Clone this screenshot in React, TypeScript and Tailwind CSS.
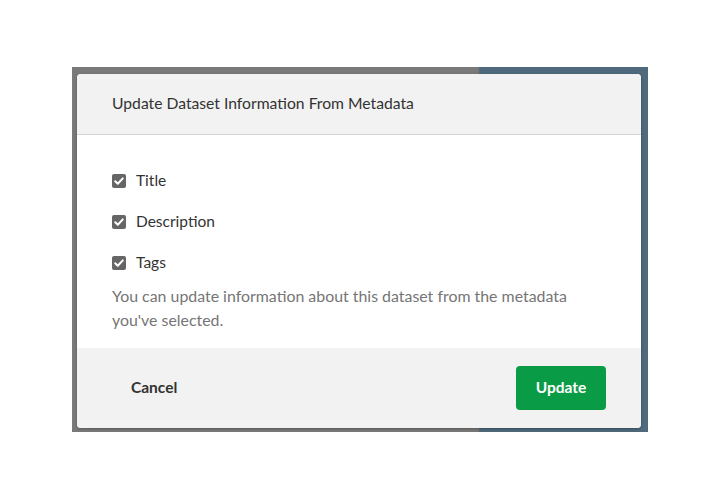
import React from 'react';

function CheckBox() {
    return (
        <span className="w-[14px] h-[14px] rounded-[2px] bg-[#666666] flex items-center justify-center shrink-0">
            <svg viewBox="0 0 14 14" className="w-[14px] h-[14px]">
                <path d="M3.2 7.3 L5.8 9.8 L10.8 4.4" fill="none" stroke="#fff" strokeWidth="2" strokeLinecap="round" strokeLinejoin="round" />
            </svg>
        </span>
    );
}

export default function App() {
    const fields = ['Title', 'Description', 'Tags'];
    return (
        <div className="w-[720px] h-[500px] bg-white pt-[67px] pl-[72px] font-['Lato','Liberation_Sans',sans-serif]">
            {/* --- BACKDROP --- */}
            <div className="w-[576px] h-[365px] pt-[7px] pl-[5px] bg-[linear-gradient(to_right,#7a7a7a_0%,#7a7a7a_70.5%,#4e6a7c_70.8%,#4e6a7c_100%)]">
                {/* --- MODAL --- */}
                <div className="w-[564px] h-[354px] bg-white rounded-[4px] overflow-hidden flex flex-col shadow-[0_1px_3px_rgba(0,0,0,0.3)]">
                    <div className="h-[61px] shrink-0 bg-[#f2f2f2] border-b border-[#d4d4d4] flex items-center px-[35px] text-[15.7px] text-[#333333]">
                        Update Dataset Information From Metadata
                    </div>
                    <div className="flex-1 px-[35px] pt-[35px]">
                        <div className="flex flex-col gap-[19px]">
                            {fields.map((f) => (
                                <label key={f} className="flex items-center gap-[10px] h-[22px] text-[15.5px] text-[#333333]">
                                    <CheckBox />
                                    {f}
                                </label>
                            ))}
                        </div>
                        <p className="mt-[10px] text-[15.9px] leading-[24px] text-[#757575] w-[480px]">
                            You can update information about this dataset from the metadata you've selected.
                        </p>
                    </div>
                    <div className="h-[80px] shrink-0 bg-[#f2f2f2] flex items-center justify-between pl-[54px] pr-[35px]">
                        <button className="text-[15.5px] font-bold text-[#333333]">Cancel</button>
                        <button className="w-[90px] h-[44px] rounded-[4px] bg-[#0a9b46] text-white text-[15.5px] font-bold">
                            Update
                        </button>
                    </div>
                </div>
            </div>
        </div>
    );
}
